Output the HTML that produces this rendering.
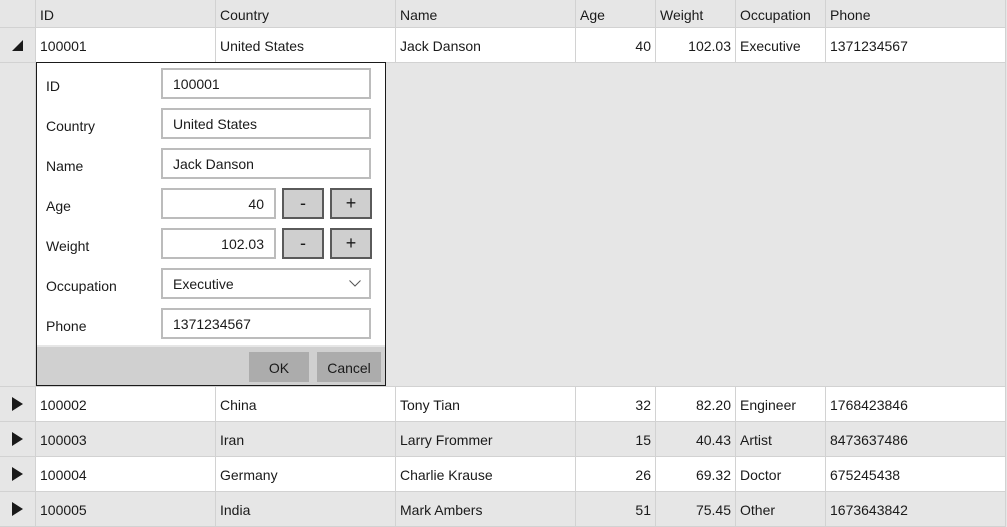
<!DOCTYPE html>
<html><head><style>
*{box-sizing:border-box;margin:0;padding:0}
body{width:1007px;height:527px;overflow:hidden;background:#e6e6e6;font-family:"Liberation Sans",sans-serif;font-size:14px;color:#1a1a1a;position:relative}
.row{position:absolute;left:0;display:flex;width:1006px}
.row>div{border-right:1px solid #d2d2d2;border-bottom:1px solid #d2d2d2;padding:2px 4px 0;display:flex;align-items:center;white-space:nowrap;overflow:hidden}
.row>div:first-child{background:#e6e6e6;justify-content:center;padding:0}
.r{justify-content:flex-end}
.w{background:#fff}.g{background:#e6e6e6}
.c0{width:36px}.c1{width:180px}.c2{width:180px}.c3{width:180px}.c4{width:80px}.c5{width:80px}.c6{width:90px}.c7{width:180px}
.tri{width:0;height:0;border-top:7px solid transparent;border-bottom:7px solid transparent;border-left:11px solid #1a1a1a}
.pop{position:absolute;left:36px;top:62px;width:350px;height:324px;border:1px solid #1a1a1a;background:#fff}
.lbl{position:absolute;left:9px}
.in{position:absolute;left:124px;width:210px;height:31px;border:2px solid #bcbcbc;padding:1px 10px 0;display:flex;align-items:center}
.btn{position:absolute;width:42px;height:31px;border:2px solid #5a5a5a;background:#cfcfcf;display:flex;align-items:center;justify-content:center;font-size:18px}
.foot{position:absolute;left:0;top:282px;width:348px;height:40px;background:#d0d0d0;border-top:2px solid #e6e6e6}
.fb{position:absolute;top:5px;height:30px;background:#acacac;display:flex;align-items:center;justify-content:center;padding-top:2px}
</style></head><body>
<div class="row" style="top:0;height:28px"><div class="c0"></div><div class="c1">ID</div><div class="c2">Country</div><div class="c3">Name</div><div class="c4">Age</div><div class="c5">Weight</div><div class="c6">Occupation</div><div class="c7">Phone</div></div>
<div class="row w" style="top:28px;height:35px"><div class="c0"><div style="width:0;height:0;border-left:11px solid transparent;border-bottom:11px solid #1a1a1a"></div></div><div class="c1 w">100001</div><div class="c2 w">United States</div><div class="c3 w">Jack Danson</div><div class="c4 w r">40</div><div class="c5 w r">102.03</div><div class="c6 w">Executive</div><div class="c7 w">1371234567</div></div>
<div style="position:absolute;left:35px;top:63px;width:1px;height:324px;background:#d2d2d2"></div>
<div style="position:absolute;left:0;top:386px;width:1006px;height:1px;background:#d2d2d2"></div>
<div style="position:absolute;left:1005px;top:63px;width:1px;height:324px;background:#d2d2d2"></div>
<div class="pop">
<div class="lbl" style="top:15px">ID</div><div class="in" style="top:5px">100001</div>
<div class="lbl" style="top:55px">Country</div><div class="in" style="top:45px">United States</div>
<div class="lbl" style="top:95px">Name</div><div class="in" style="top:85px">Jack Danson</div>
<div class="lbl" style="top:135px">Age</div><div class="in" style="top:125px;width:115px;justify-content:flex-end">40</div>
<div class="btn" style="left:245px;top:125px">-</div><div class="btn" style="left:293px;top:125px">+</div>
<div class="lbl" style="top:175px">Weight</div><div class="in" style="top:165px;width:115px;justify-content:flex-end">102.03</div>
<div class="btn" style="left:245px;top:165px">-</div><div class="btn" style="left:293px;top:165px">+</div>
<div class="lbl" style="top:215px">Occupation</div><div class="in" style="top:205px">Executive<svg style="position:absolute;right:8px;top:10px" width="12" height="7"><path d="M0.5 0.5L6 6L11.5 0.5" fill="none" stroke="#555" stroke-width="1"/></svg></div>
<div class="lbl" style="top:255px">Phone</div><div class="in" style="top:245px">1371234567</div>
<div class="foot"><div class="fb" style="left:212px;width:60px">OK</div><div class="fb" style="left:280px;width:64px">Cancel</div></div>
</div>
<div class="row" style="top:387px;height:35px"><div class="c0"><div class="tri"></div></div><div class="c1 w">100002</div><div class="c2 w">China</div><div class="c3 w">Tony Tian</div><div class="c4 w r">32</div><div class="c5 w r">82.20</div><div class="c6 w">Engineer</div><div class="c7 w">1768423846</div></div>
<div class="row" style="top:422px;height:35px"><div class="c0"><div class="tri"></div></div><div class="c1 g">100003</div><div class="c2 g">Iran</div><div class="c3 g">Larry Frommer</div><div class="c4 g r">15</div><div class="c5 g r">40.43</div><div class="c6 g">Artist</div><div class="c7 g">8473637486</div></div>
<div class="row" style="top:457px;height:35px"><div class="c0"><div class="tri"></div></div><div class="c1 w">100004</div><div class="c2 w">Germany</div><div class="c3 w">Charlie Krause</div><div class="c4 w r">26</div><div class="c5 w r">69.32</div><div class="c6 w">Doctor</div><div class="c7 w">675245438</div></div>
<div class="row" style="top:492px;height:35px"><div class="c0"><div class="tri"></div></div><div class="c1 g">100005</div><div class="c2 g">India</div><div class="c3 g">Mark Ambers</div><div class="c4 g r">51</div><div class="c5 g r">75.45</div><div class="c6 g">Other</div><div class="c7 g">1673643842</div></div>
</body></html>
